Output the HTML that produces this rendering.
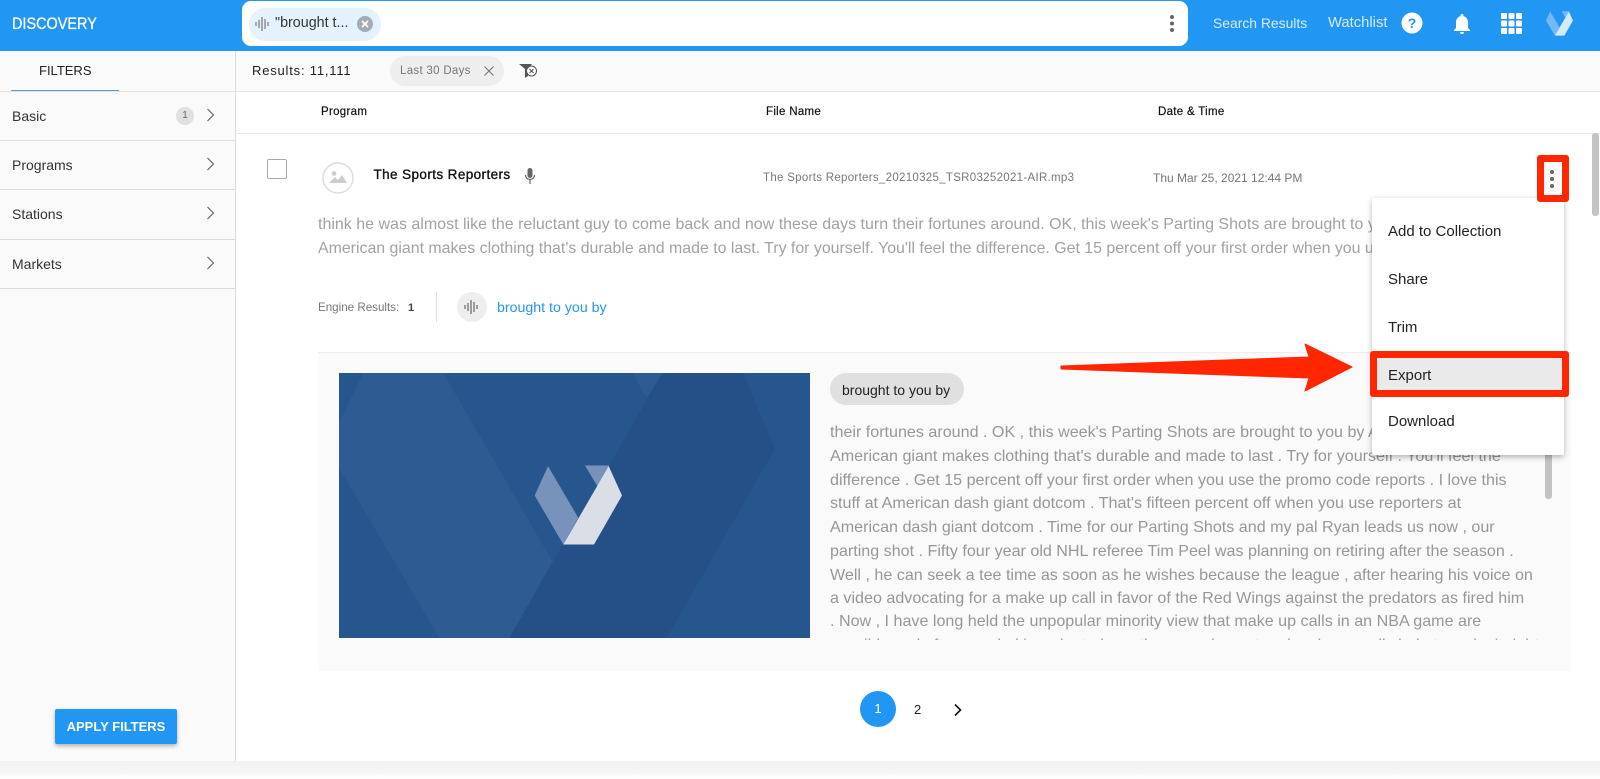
<!DOCTYPE html>
<html><head><meta charset="utf-8"><style>
*{box-sizing:border-box}
html,body{margin:0;padding:0;width:1600px;height:779px;overflow:hidden;background:#fff;font-family:"Liberation Sans",sans-serif}
.t{position:absolute;white-space:nowrap;line-height:20px;margin-top:-10px}
.b{position:absolute}
.side{font-size:14px;color:#333;left:12px}
.hl{position:absolute;left:0;width:236px;height:1px;background:#ddd}
.chev{position:absolute;left:206px;width:10px;height:14px}
.mi{font-size:15px;color:#222;left:16px;position:absolute;white-space:nowrap;line-height:20px;margin-top:-10px}
.pl{position:absolute;white-space:nowrap;line-height:20px;margin-top:-10px;left:512px;font-size:16.1px;color:#979797}
.hd{font-size:11.5px;color:#111;letter-spacing:.3px;-webkit-text-stroke:.2px #111}
</style></head><body>
<div class="b" style="left:0;top:0;width:1600px;height:51px;background:#2196f3"></div>
<div class="t" style="left:12px;top:24px;font-size:17px;color:#fff;transform:scaleX(.85);transform-origin:0 50%;-webkit-text-stroke:.3px #fff">DISCOVERY</div>
<div class="b" style="left:242px;top:1px;width:946px;height:45px;background:#fff;border-radius:9px"></div>
<div class="b" style="left:249px;top:8px;width:132px;height:33px;background:#e3f2fd;border-radius:17px"></div>
<svg class="b" style="left:254px;top:15px" width="18" height="18" viewBox="0 0 18 18" stroke="#777" stroke-width="1.2"><path d="M2 7v4M5 5v8M8 2v14M11 4v10M14 7v4"/></svg>
<div class="t" style="left:275px;top:23px;font-size:14.3px;color:#333">"brought t...</div>
<svg class="b" style="left:356px;top:15px" width="18" height="18" viewBox="0 0 18 18"><circle cx="9" cy="9" r="8" fill="#a3acb4"/><path d="M6 6l6 6M12 6l-6 6" stroke="#fff" stroke-width="1.6"/></svg>
<svg class="b" style="left:1168px;top:14px" width="8" height="20"><circle cx="4" cy="3" r="2" fill="#666"/><circle cx="4" cy="9.500" r="2" fill="#666"/><circle cx="4" cy="16" r="2" fill="#666"/></svg>
<div class="t" style="left:1213px;top:23px;font-size:13.9px;color:#d6ebfc">Search Results</div>
<div class="t" style="left:1328px;top:23px;font-size:14.8px;color:#d6ebfc">Watchlist</div>
<svg class="b" style="left:1401px;top:12px" width="22" height="22"><circle cx="11" cy="11" r="10.500" fill="#fff"/><text x="11" y="16" text-anchor="middle" font-family="Liberation Sans" font-weight="bold" font-size="14" fill="#2196f3">?</text></svg>
<svg class="b" style="left:1452px;top:13px" width="20" height="22" viewBox="0 0 20 22"><path d="M10 1a1.500 1.500 0 0 1 1.500 1.500v.6C14.500 4 16 6.500 16 9.500V15l2 2v1H2v-1l2-2V9.500C4 6.500 5.500 4 8.500 3.100v-.6A1.500 1.500 0 0 1 10 1zM8 19h4a2 2 0 0 1-4 0z" fill="#fff"/></svg>
<svg class="b" style="left:1501px;top:13px" width="21" height="21" fill="#fff"><rect width="6" height="6" rx="1"/><rect x="7.500" width="6" height="6" rx="1"/><rect x="15" width="6" height="6" rx="1"/><rect y="7.500" width="6" height="6" rx="1"/><rect x="7.500" y="7.500" width="6" height="6" rx="1"/><rect x="15" y="7.500" width="6" height="6" rx="1"/><rect y="15" width="6" height="6" rx="1"/><rect x="7.500" y="15" width="6" height="6" rx="1"/><rect x="15" y="15" width="6" height="6" rx="1"/></svg>
<svg class="b" style="left:1546px;top:11px" width="27" height="25" viewBox="644 318 262 238"><polygon points="684,320 775,475 730,555 644,408" fill="#74b9f6"/><polygon points="795,318 868,318 832,380" fill="#74b9f6"/><polygon points="866,320 906,408 822,555 730,555" fill="#d3e9fc"/></svg>

<div class="b" style="left:0;top:51px;width:1600px;height:41px;background:#fafafa;border-bottom:1px solid #e4e4e4"></div>
<div class="b" style="left:0;top:51px;width:236px;height:710px;background:#fafafa;border-right:1px solid #ddd"></div>
<div class="t" style="left:39px;top:71px;font-size:13px;color:#222">FILTERS</div>
<div class="b" style="left:11px;top:90px;width:108px;height:1px;background:#5b9bd5"></div>
<div class="b" style="left:0;top:91px;width:236px;height:1px;background:#e2e2d6"></div>
<div class="t side" style="top:116px">Basic</div>
<div class="b" style="left:176px;top:107px;width:18px;height:18px;border-radius:9px;background:#e0e0e0;font-size:10px;color:#666;text-align:center;line-height:18px">1</div>
<div class="hl" style="top:140px"></div>
<div class="t side" style="top:165px">Programs</div>
<div class="hl" style="top:189px"></div>
<div class="t side" style="top:214px">Stations</div>
<div class="hl" style="top:239px"></div>
<div class="t side" style="top:264px">Markets</div>
<div class="hl" style="top:288px"></div>
<svg class="chev" style="top:108px" viewBox="0 0 10 14" fill="none" stroke="#555" stroke-width="1"><path d="M1.500 1l6 6-6 6"/></svg>
<svg class="chev" style="top:157px" viewBox="0 0 10 14" fill="none" stroke="#555" stroke-width="1"><path d="M1.500 1l6 6-6 6"/></svg>
<svg class="chev" style="top:206px" viewBox="0 0 10 14" fill="none" stroke="#555" stroke-width="1"><path d="M1.500 1l6 6-6 6"/></svg>
<svg class="chev" style="top:256px" viewBox="0 0 10 14" fill="none" stroke="#555" stroke-width="1"><path d="M1.500 1l6 6-6 6"/></svg>
<div class="b" style="left:55px;top:709px;width:122px;height:35px;background:#2196f3;border-radius:2px;box-shadow:0 2px 4px rgba(0,0,0,.3);color:#fff;font-size:13px;font-weight:bold;text-align:center;line-height:35px">APPLY FILTERS</div>

<div class="t" style="left:252px;top:71px;font-size:13px;color:#222;letter-spacing:.8px">Results: 11,111</div>
<div class="b" style="left:390px;top:56px;width:114px;height:30px;background:#eee;border-radius:15px"></div>
<div class="t" style="left:400px;top:71px;font-size:11.5px;color:#777;letter-spacing:.3px">Last 30 Days</div>
<svg class="b" style="left:484px;top:66px" width="10" height="10" stroke="#777" stroke-width="1.100"><path d="M.5.5l9 9M9.500.5l-9 9"/></svg>
<svg class="b" style="left:519px;top:63px" width="19" height="16" viewBox="0 0 19 16"><path d="M0 1h13l-4 5v7l-3 2V6z" fill="#555"/><circle cx="12.500" cy="8" r="5" fill="#fafafa" stroke="#555"/><path d="M10.500 6l4 4M14.500 6l-4 4" stroke="#555"/></svg>

<div class="b" style="left:237px;top:133px;width:1363px;height:1px;background:#e4e4e4"></div>
<div class="t hd" style="left:321px;top:112px">Program</div>
<div class="t hd" style="left:766px;top:112px">File Name</div>
<div class="t hd" style="left:1158px;top:112px">Date &amp; Time</div>

<div class="b" style="left:267px;top:159px;width:20px;height:20px;border:1.500px solid #aaa;border-radius:2px"></div>
<svg class="b" style="left:322px;top:162px" width="32" height="32" viewBox="0 0 32 32"><circle cx="16" cy="16" r="15" fill="#fff" stroke="#ddd" stroke-width="1.500"/><circle cx="12" cy="11.500" r="2.300" fill="#ccc"/><path d="M7 21l6-6 3 3 4-5 5 8z" fill="#ccc"/></svg>
<div class="t" style="left:373.500px;top:174.500px;font-size:13.500px;color:#111;letter-spacing:.4px;-webkit-text-stroke:.35px #111">The Sports Reporters</div>
<svg class="b" style="left:524px;top:167px" width="12" height="18" viewBox="0 0 12 18"><rect x="3.500" y="1" width="5" height="10" rx="2.500" fill="#666"/><path d="M1.500 8a4.500 4.500 0 0 0 9 0M6 13v4" fill="none" stroke="#666" stroke-width="1.200"/></svg>
<div class="t" style="left:763px;top:178px;font-size:11.5px;color:#777;letter-spacing:.3px">The Sports Reporters_20210325_TSR03252021-AIR.mp3</div>
<div class="t" style="left:1153px;top:178px;font-size:12px;color:#777">Thu Mar 25, 2021 12:44 PM</div>
<div class="b" style="left:1592px;top:133px;width:7px;height:83px;background:#c4c4c4;border-radius:3px"></div>

<div class="t" style="left:318px;top:225px;font-size:16px;color:#a2a2a2">think he was almost like the reluctant guy to come back and now these days turn their fortunes around. OK, this week's Parting Shots are brought to you by</div>
<div class="t" style="left:318px;top:249px;font-size:15.9px;color:#a2a2a2">American giant makes clothing that's durable and made to last. Try for yourself. You'll feel the difference. Get 15 percent off your first order when you use the promo</div>
<div class="t" style="left:318px;top:308px;font-size:11.6px;color:#777">Engine Results:</div>
<div class="t" style="left:408px;top:308px;font-size:11px;color:#444;font-weight:bold">1</div>
<div class="b" style="left:436px;top:292px;width:1px;height:30px;background:#e0e0e0"></div>
<div class="b" style="left:457px;top:292px;width:30px;height:30px;border-radius:15px;background:#eee"></div>
<svg class="b" style="left:463px;top:298px" width="18" height="18" viewBox="0 0 18 18" stroke="#666" stroke-width="1.200"><path d="M2 7v4M5 5v8M8 2v14M11 4v10M14 7v4"/></svg>
<div class="t" style="left:497px;top:308px;font-size:14.2px;color:#2196f3">brought to you by</div>

<div class="b" style="left:318px;top:352px;width:1253px;height:319px;background:#fafafa;border-top:1px solid #eee"></div>
<svg class="b" style="left:339px;top:373px" width="471" height="265" viewBox="57 41 1413 794" preserveAspectRatio="none"><rect x="57" y="41" width="1413" height="794" fill="#27568f"/><polygon points="130,41 370,41 697,605 568,835 358,835 57,325 57,190" fill="#2d5b92"/><polygon points="1027,41 1270,41 1365,268 1040,835 568,835" fill="#245087"/><polygon points="938,41 1027,41 980,115" fill="#2d5b92"/><polygon points="684,320 775,475 730,555 644,408" fill="#7793bb"/><polygon points="795,318 868,318 832,380" fill="#7793bb"/><polygon points="866,320 906,408 822,555 730,555" fill="#dadfe7"/></svg>
<div class="b" style="left:830px;top:373px;width:134px;height:32px;background:#e0e0e0;border-radius:16px"></div>
<div class="t" style="left:842px;top:390px;font-size:14px;color:#222">brought to you by</div>

<div class="b" style="left:318px;top:420px;width:1222px;height:220px;overflow:hidden">
<div class="pl" style="top:12px">their fortunes around . OK , this week's Parting Shots are brought to you by American</div>
<div class="pl" style="top:36px">American giant makes clothing that's durable and made to last . Try for yourself . You'll feel the</div>
<div class="pl" style="top:60px">difference . Get 15 percent off your first order when you use the promo code reports . I love this</div>
<div class="pl" style="top:83px">stuff at American dash giant dotcom . That's fifteen percent off when you use reporters at</div>
<div class="pl" style="top:107px">American dash giant dotcom . Time for our Parting Shots and my pal Ryan leads us now , our</div>
<div class="pl" style="top:131px">parting shot . Fifty four year old NHL referee Tim Peel was planning on retiring after the season .</div>
<div class="pl" style="top:155px">Well , he can seek a tee time as soon as he wishes because the league , after hearing his voice on</div>
<div class="pl" style="top:178px">a video advocating for a make up call in favor of the Red Wings against the predators as fired him</div>
<div class="pl" style="top:201px">. Now , I have long held the unpopular minority view that make up calls in an NBA game are</div>
<div class="pl" style="top:225px">possible and often needed in order to keep the game honest and make up calls help to make it right</div>
</div>
<div class="b" style="left:1545px;top:440px;width:7px;height:59px;background:#c4c4c4;border-radius:3px"></div>

<div class="b" style="left:860px;top:691px;width:36px;height:36px;border-radius:18px;background:#2196f3;color:#fff;font-size:13px;text-align:center;line-height:36px">1</div>
<div class="t" style="left:914px;top:710px;font-size:13px;color:#222">2</div>
<svg class="b" style="left:953px;top:703px" width="10" height="14" fill="none" stroke="#111" stroke-width="1.600"><path d="M2 1.500l5.500 5.500-5.500 5.500"/></svg>

<div class="b" style="left:1372px;top:198px;width:192px;height:257px;background:#fff;box-shadow:0 2px 6px rgba(0,0,0,.3);border-radius:2px">
<div class="mi" style="top:34px">Add to Collection</div>
<div class="mi" style="top:82px">Share</div>
<div class="mi" style="top:130px">Trim</div>
<div class="mi" style="top:178px">Export</div>
<div class="mi" style="top:224px">Download</div>
</div>
<div class="b" style="left:1537px;top:155px;width:32px;height:47px;border:7px solid #ff2600;border-radius:3px;background:#fff"></div>
<svg class="b" style="left:1549px;top:169px" width="6" height="20" fill="#666"><circle cx="3" cy="3" r="2"/><circle cx="3" cy="10" r="2"/><circle cx="3" cy="17" r="2"/></svg>
<div class="b" style="left:1370px;top:351px;width:199px;height:46px;border:7px solid #ff2600;border-radius:3px;background:#eaeaea"></div>
<div class="t" style="left:1388px;top:376px;font-size:15px;color:#222">Export</div>
<svg class="b" style="left:0;top:0" width="1600" height="779"><polygon points="1061,366 1309,357 1305,344 1352,367 1305,391 1309,378 1061,369" fill="#ff2600" stroke="#ff2600" stroke-linejoin="round" stroke-width="1"/></svg>

<div class="b" style="left:0;top:761px;width:1600px;height:18px;background:linear-gradient(#f1f1f1,#f6f6f6 60%,#fff)"></div>
</body></html>
